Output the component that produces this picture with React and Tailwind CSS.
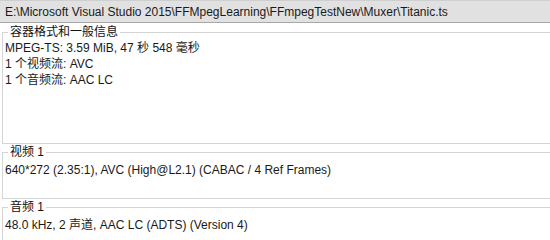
import React from "react";

const font = { fontFamily: '"Liberation Sans", "Noto Sans CJK SC", Arial, sans-serif' };

function Group({ title, lines, className }) {
  return (
    <fieldset className={"ml-[2px] -mr-[2px] border border-[#d5d5d5] pl-[2px] " + className}>
      <legend className="ml-[3px] px-[2px] text-[12px] leading-[16px] text-[#111]">{title}</legend>
      {lines.map((l, i) => (
        <div key={i} className="text-[12px] leading-[16px] text-[#1a1a1a] whitespace-nowrap">{l}</div>
      ))}
    </fieldset>
  );
}

export default function App() {
  return (
    <div className="w-[550px] h-[240px] overflow-hidden bg-white" style={font}>
      <div className="h-[23px] bg-[#e1e1e1] border-t border-t-[#cfcfcf] border-b border-b-[#a8a8a8] flex items-center pl-[5px] text-[12px] text-[#1a1a1a] whitespace-nowrap">
        E:\Microsoft Visual Studio 2015\FFMpegLearning\FFmpegTestNew\Muxer\Titanic.ts
      </div>
      <div className="flex flex-col mt-[1px]">
        <Group
          title="容器格式和一般信息"
          className="h-[120px]"
          lines={["MPEG-TS: 3.59 MiB, 47 秒 548 毫秒", "1 个视频流: AVC", "1 个音频流: AAC LC"]}
        />
        <Group
          title="视频 1"
          className="h-[55px] pt-[2px]"
          lines={["640*272 (2.35:1), AVC (High@L2.1) (CABAC / 4 Ref Frames)"]}
        />
        <Group
          title="音频 1"
          className="h-[60px] pt-[2px]"
          lines={["48.0 kHz, 2 声道, AAC LC (ADTS) (Version 4)"]}
        />
      </div>
    </div>
  );
}
